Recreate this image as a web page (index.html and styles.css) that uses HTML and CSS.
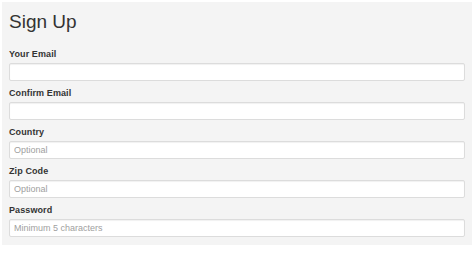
FILE: index.html
```html
<!DOCTYPE html>
<html>
<head>
<meta charset="utf-8">
<link rel="stylesheet" href="styles.css">
</head>
<body>
<div class="panel">
  <h1 class="title">Sign Up</h1>
  <div class="field">
    <label class="label">Your Email</label>
    <input class="input" type="text">
  </div>
  <div class="field">
    <label class="label">Confirm Email</label>
    <input class="input" type="text">
  </div>
  <div class="field">
    <label class="label">Country</label>
    <input class="input" type="text" placeholder="Optional">
  </div>
  <div class="field">
    <label class="label">Zip Code</label>
    <input class="input" type="text" placeholder="Optional">
  </div>
  <div class="field last">
    <label class="label">Password</label>
    <input class="input" type="text" placeholder="Minimum 5 characters">
  </div>
</div>
</body>
</html>
```
FILE: styles.css
```css
html, body {
  margin: 0;
  padding: 0;
  background: #ffffff;
}
body {
  font-family: "Liberation Sans", Arial, sans-serif;
  color: #333333;
}
.panel {
  margin: 2px 2px 0 2px;
  width: 470px;
  box-sizing: border-box;
  background: #f4f4f4;
  padding: 10px 7px 8px 7px;
}
.title {
  margin: 0 0 17px 0;
  font-size: 19px;
  line-height: 20px;
  font-weight: normal;
  color: #333333;
}
.field {
  display: flex;
  flex-direction: column;
  margin-bottom: 7px;
}
.field.last {
  margin-bottom: 0;
}
.label {
  font-size: 9px;
  line-height: 11px;
  font-weight: bold;
  color: #333333;
  margin-bottom: 3px;
  letter-spacing: 0.1px;
}
.input {
  box-sizing: border-box;
  height: 18px;
  width: 456px;
  margin: 0;
  padding: 0 4px;
  border: 1px solid #dcdcdc;
  border-radius: 2px;
  background: #ffffff;
  box-shadow: inset 0 1px 1px rgba(0,0,0,0.06);
  font-family: "Liberation Sans", Arial, sans-serif;
  font-size: 9px;
  color: #555555;
  outline: none;
}
.input::placeholder {
  color: #a0a0a0;
}
```
